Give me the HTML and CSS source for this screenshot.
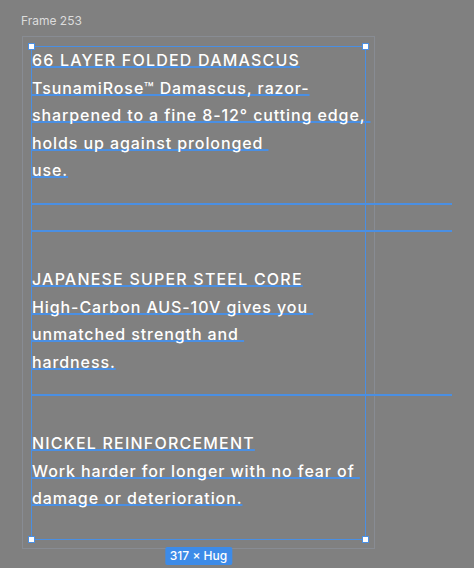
FILE: index.html
```html
<!DOCTYPE html>
<html>
<head>
<meta charset="utf-8">
<link rel="stylesheet" href="styles.css">
</head>
<body>
<div class="canvas">
  <div class="frame-label">Frame 253</div>
  <div class="outer">
    <div class="selection">
      <div class="block">
        <div class="ln head"><span>66 LAYER FOLDED DAMASCUS</span></div>
        <div class="ln"><span>TsunamiRose™ Damascus, razor-</span></div>
        <div class="ln"><span>sharpened to a fine 8-12° cutting edge, </span></div>
        <div class="ln"><span>holds up against prolonged </span></div>
        <div class="ln"><span>use.</span></div>
      </div>
      <div class="guide g1"></div>
      <div class="guide g2"></div>
      <div class="block b2">
        <div class="ln head"><span>JAPANESE SUPER STEEL CORE</span></div>
        <div class="ln"><span>High-Carbon AUS-10V gives you </span></div>
        <div class="ln"><span>unmatched strength and </span></div>
        <div class="ln"><span>hardness.</span></div>
      </div>
      <div class="guide g3"></div>
      <div class="block b3">
        <div class="ln head"><span>NICKEL REINFORCEMENT</span></div>
        <div class="ln"><span>Work harder for longer with no fear of </span></div>
        <div class="ln"><span>damage or deterioration.</span></div>
      </div>
      <span class="handle tl"></span>
      <span class="handle tr"></span>
      <span class="handle bl"></span>
      <span class="handle br"></span>
      <div class="badge">317 × Hug</div>
    </div>
  </div>
</div>
</body>
</html>
```
FILE: styles.css
```css
html, body {
  margin: 0;
  padding: 0;
  background: #808080;
}
.canvas {
  width: 474px;
  height: 568px;
  overflow: hidden;
  position: relative;
  font-family: Inter, "Liberation Sans", sans-serif;
}
.frame-label {
  height: 36px;
  box-sizing: border-box;
  padding: 13px 0 0 21px;
  font-size: 12px;
  line-height: 16px;
  color: #dcdcdc;
}
.outer {
  margin-left: 22px;
  width: 353px;
  height: 513px;
  box-sizing: border-box;
  border: 1px solid #888c93;
  padding: 9px 0 0 8px;
}
.selection {
  position: relative;
  width: 335px;
  height: 494px;
  box-sizing: border-box;
  border: 1px solid #4a8fe3;
}
.ln {
  height: 27.5px;
  line-height: 27.5px;
  font-size: 16px;
  font-weight: 500;
  color: #ffffff;
  white-space: pre;
  letter-spacing: 0.9px;
}
.ln.head {
  letter-spacing: 1.2px;
}
.ln span {
  text-decoration: underline;
  text-decoration-color: #4a8fe3;
  text-decoration-thickness: 2px;
  text-underline-offset: 0px;
  text-decoration-skip-ink: none;
}
.guide {
  height: 2px;
  width: 421px;
  margin-left: -1px;
  background: #4a8fe3;
}
.g1 { margin-top: 18.5px; }
.g2 { margin-top: 25px; }
.b2 { margin-top: 34px; }
.g3 { margin-top: 18px; }
.b3 { margin-top: 34px; }
.handle {
  position: absolute;
  width: 5px;
  height: 5px;
  background: #ffffff;
  border: 1px solid #4a8fe3;
}
.tl { left: -4px; top: -4px; }
.tr { right: -4px; top: -4px; }
.bl { left: -4px; bottom: -4px; }
.br { right: -4px; bottom: -4px; }
.badge {
  position: absolute;
  left: 50%;
  transform: translateX(-50%);
  top: 500px;
  height: 18px;
  line-height: 18px;
  padding: 0 5px;
  border-radius: 2px;
  background: #3d8be8;
  color: #ffffff;
  font-size: 12px;
  font-weight: 500;
  white-space: nowrap;
}
```
